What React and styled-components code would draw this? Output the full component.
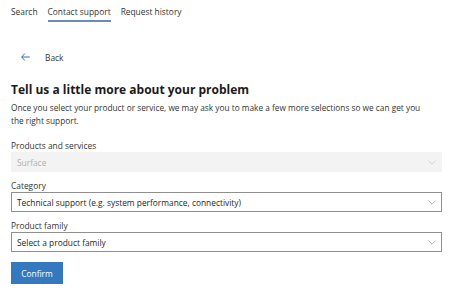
import React from "react";
import styled, { createGlobalStyle } from "styled-components";

const Global = createGlobalStyle`
  html, body { margin: 0; padding: 0; background: #fff; }
  body { font-family: "Open Sans", "Noto Sans", sans-serif; color: #262626; }
  * { box-sizing: border-box; }
`;

const Page = styled.div`
  width: 453px;
  height: 306px;
  padding: 0 11px;
  overflow: hidden;
`;

const Tabs = styled.nav`
  display: flex;
  gap: 10px;
  height: 22px;
  align-items: stretch;
`;

const Tab = styled.div`
  font-size: 8.4px;
  color: #333;
  display: flex;
  align-items: center;
  padding-top: 2px;
  border-bottom: 2px solid ${(p) => (p.$active ? "#6a8cb3" : "transparent")};
`;

const BackRow = styled.div`
  display: flex;
  align-items: center;
  gap: 15px;
  margin-top: 27px;
  padding-left: 10px;
  height: 16px;
  font-size: 8.4px;
  color: #333;
`;

const Heading = styled.h1`
  margin: 17px 0 0;
  font-size: 12px;
  font-weight: 700;
  line-height: 16px;
  color: #1b1b1b;
`;

const Para = styled.p`
  margin: 3px 0 0;
  max-width: 416px;
  font-size: 8.3px;
  line-height: 13px;
  color: #333;
`;

const Field = styled.div`
  margin-top: ${(p) => p.$mt || 0}px;
  display: flex;
  flex-direction: column;
`;

const Label = styled.div`
  font-size: 8.4px;
  line-height: 13px;
  color: #333;
`;

const SelectBox = styled.div`
  height: 20px;
  display: flex;
  align-items: center;
  justify-content: space-between;
  padding: 0 5px 0 5px;
  font-size: 8.4px;
  color: ${(p) => (p.$disabled ? "#b0b0b0" : "#262626")};
  background: ${(p) => (p.$disabled ? "#f3f3f3" : "#fff")};
  border: 1px solid ${(p) => (p.$disabled ? "#f3f3f3" : "#8f8f8f")};
`;

const Button = styled.button`
  margin-top: 10px;
  width: 52px;
  height: 22px;
  border: none;
  background: #3479bf;
  color: #fff;
  font-family: inherit;
  font-size: 8.4px;
  padding: 0;
`;

const Chevron = ({ color = "#9a9a9a" }) => (
  <svg width="8" height="5" viewBox="0 0 8 5">
    <path d="M0.4 0.6 L4 4.2 L7.6 0.6" fill="none" stroke={color} strokeWidth="0.8" />
  </svg>
);

const Arrow = () => (
  <svg width="9" height="8" viewBox="0 0 9 8">
    <path d="M3.8 0.5 L0.7 4 L3.8 7.5 M0.7 4 H8.8" fill="none" stroke="#2e6fb0" strokeWidth="1" />
  </svg>
);

export default function App() {
  return (
    <>
      <Global />
      <Page>
        <Tabs>
          <Tab>Search</Tab>
          <Tab $active>Contact support</Tab>
          <Tab>Request history</Tab>
        </Tabs>
        <BackRow>
          <Arrow />
          <span>Back</span>
        </BackRow>
        <Heading>Tell us a little more about your problem</Heading>
        <Para>
          Once you select your product or service, we may ask you to make a few more selections so we can get you the right support.
        </Para>
        <Field $mt={12}>
          <Label>Products and services</Label>
          <SelectBox $disabled>
            <span>Surface</span>
            <Chevron color="#cccccc" />
          </SelectBox>
        </Field>
        <Field $mt={7}>
          <Label>Category</Label>
          <SelectBox>
            <span>Technical support (e.g. system performance, connectivity)</span>
            <Chevron />
          </SelectBox>
        </Field>
        <Field $mt={7}>
          <Label>Product family</Label>
          <SelectBox>
            <span>Select a product family</span>
            <Chevron />
          </SelectBox>
        </Field>
        <Button>Confirm</Button>
      </Page>
    </>
  );
}
